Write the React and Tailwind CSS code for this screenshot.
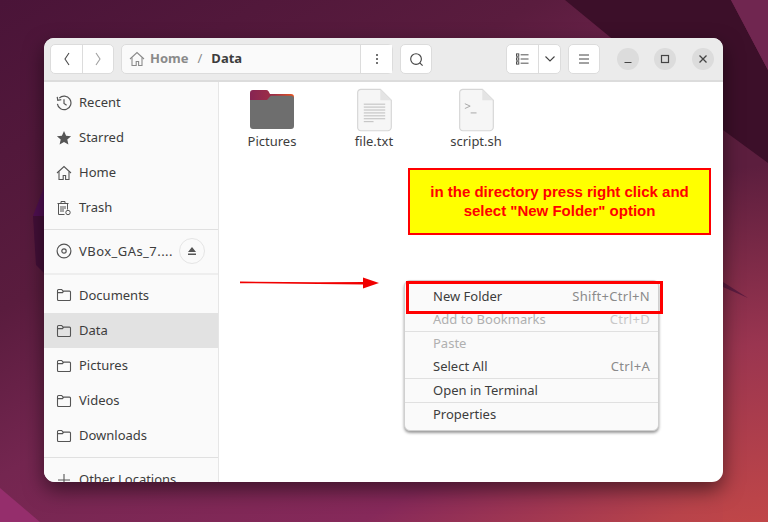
import React from 'react';

const ink = '#555555';

function Folder() {
  return (
    <svg width="16" height="16" viewBox="0 0 16 16" fill="none" stroke={ink} strokeWidth="1.1" className="shrink-0">
      <path d="M1.5 3.5a1 1 0 0 1 1-1h3.2l1.3 1.6h6.5a1 1 0 0 1 1 1v7.4a1 1 0 0 1-1 1h-11a1 1 0 0 1-1-1z" />
      <path d="M1.5 5.6h5l1.2-1.5" />
    </svg>
  );
}

function HomeIcon({ color = ink }) {
  return (
    <svg width="16" height="16" viewBox="0 0 16 16" fill="none" stroke={color} strokeWidth="1.1" className="shrink-0">
      <path d="M1 8l7-6.5L15 8" />
      <path d="M3 6.5v8h4.2v-4h2.4v4h3.4v-8" />
    </svg>
  );
}

function Clock() {
  return (
    <svg width="16" height="16" viewBox="0 0 16 16" fill="none" stroke={ink} strokeWidth="1.2" className="shrink-0">
      <path d="M3.2 3.2A6.8 6.8 0 1 1 1.4 8.8" />
      <path d="M1.2 1.8l.6 3.6 3.5-.7" />
      <path d="M8 4.2v4.2l2.6 1.8" />
    </svg>
  );
}

function Star() {
  return (
    <svg width="16" height="16" viewBox="0 0 16 16" fill={ink} className="shrink-0">
      <path d="M8 1l2.1 4.7 5 .5-3.8 3.4 1.1 5L8 12l-4.4 2.6 1.1-5L.9 6.2l5-.5z" />
    </svg>
  );
}

function Trash() {
  return (
    <svg width="16" height="16" viewBox="0 0 16 16" fill="none" stroke={ink} strokeWidth="1" className="shrink-0">
      <path d="M1.5 3.5h11M5 3.5V1.5h4v2" />
      <path d="M2.5 3.5v11h6M11.5 3.5v6" />
      <path d="M5 6v6M7 6v6M9 6v3" />
      <circle cx="12" cy="12.5" r="2.2" />
    </svg>
  );
}

function Disc() {
  return (
    <svg width="16" height="16" viewBox="0 0 16 16" fill="none" stroke={ink} strokeWidth="1.2" className="shrink-0">
      <circle cx="8" cy="8" r="6.9" />
      <circle cx="8" cy="8" r="2.2" />
    </svg>
  );
}

function SideRow({ icon, label, active }) {
  return (
    <div className={`flex h-[35.2px] items-center gap-[7px] pl-3 ${active ? 'bg-[#e2e2e2]' : ''}`}>
      {icon}
      <span>{label}</span>
    </div>
  );
}

function FileSheet({ children }) {
  return (
    <svg width="35" height="44" viewBox="0 0 36 44" fill="none">
      <path d="M4 .7h20L35.3 12v27.5a3.8 3.8 0 0 1-3.8 3.8H4a3.3 3.3 0 0 1-3.3-3.8V4A3.3 3.3 0 0 1 4 .7z" fill="#f6f6f6" stroke="#d6d6d6" strokeWidth="1.2" />
      <path d="M24 .7V12h11.3z" fill="#e4e4e4" />
      {children}
    </svg>
  );
}

function FileItem({ icon, label }) {
  return (
    <div className="flex w-[102px] flex-col items-center">
      <div className="flex h-[44px] items-center justify-center">{icon}</div>
      <span className="mt-[-1px] leading-[20px]">{label}</span>
    </div>
  );
}

function MenuRow({ label, keys, disabled }) {
  return (
    <div className={`flex h-[23px] items-center justify-between pl-[28px] pr-[8px] ${disabled ? 'text-[#b0b0b0]' : 'text-[#3d3d3d]'}`}>
      <span>{label}</span>
      {keys && <span className={`tracking-[0.3px] ${disabled ? 'text-[#c8c8c8]' : 'text-[#8a8a8a]'}`}>{keys}</span>}
    </div>
  );
}

export default function App() {
  return (
    <div className="relative h-[522px] w-[768px] overflow-hidden pl-[44px] pt-[38px] font-['Noto_Sans',sans-serif] text-[13px] text-[#3d3d3d]">
      {/* wallpaper */}
      <svg className="absolute inset-0" width="768" height="522" viewBox="0 0 768 522">
        <defs>
          <linearGradient id="wall" x1="0" y1="0" x2="420" y2="731" gradientUnits="userSpaceOnUse">
            <stop offset="0" stopColor="#4a1438" />
            <stop offset="0.32" stopColor="#5a1c3e" />
            <stop offset="0.49" stopColor="#742650" />
            <stop offset="0.75" stopColor="#86295a" />
            <stop offset="0.93" stopColor="#b8434a" />
            <stop offset="1" stopColor="#c24648" />
          </linearGradient>
          <linearGradient id="wallLow" x1="723" y1="170" x2="768" y2="522" gradientUnits="userSpaceOnUse">
            <stop offset="0" stopColor="#5c1e3e" />
            <stop offset="0.5" stopColor="#9a3550" />
            <stop offset="0.93" stopColor="#bb4449" />
            <stop offset="1" stopColor="#c04648" />
          </linearGradient>
        </defs>
        <rect width="768" height="522" fill="url(#wall)" />
        <path d="M723 125L768 160V522H723z" fill="url(#wallLow)" />
        <path d="M565 0H731L768 70V163L723 130L680 90L610 37z" fill="#3c0f29" />
        <path d="M731 0H768V70z" fill="#702650" />
        <path d="M0 488L40 522H0z" fill="#952e6c" />
        <path d="M44 187L33 216H44z" fill="#500f52" />
        <path d="M33 216L36 265L44 273V216z" fill="#430f38" />
        <path d="M723 282L748 298L723 287z" fill="#5c1c40" />
      </svg>

      <div className="relative flex h-[444px] w-[679px] flex-col overflow-hidden rounded-t-[10px] rounded-b-[11px] bg-white shadow-[0_8px_20px_rgba(0,0,0,0.5)]">
        {/* header bar */}
        <div className="flex h-[44px] shrink-0 items-center border-b-2 border-[#dcdcdc] bg-[#ebebeb] pl-[6px]">
          <div className="flex h-[30px] w-[64px] rounded-[5px] border border-[#dcdcdc] bg-white">
            <div className="flex w-[32px] items-center justify-center border-r border-[#dcdcdc]">
              <svg width="10" height="16" viewBox="0 0 10 16" fill="none" stroke="#4a4a4a" strokeWidth="1.1"><path d="M7 2L3 8l4 6" /></svg>
            </div>
            <div className="flex flex-1 items-center justify-center">
              <svg width="10" height="16" viewBox="0 0 10 16" fill="none" stroke="#a0a0a0" strokeWidth="1.1"><path d="M3 2l4 6-4 6" /></svg>
            </div>
          </div>
          <div className="ml-[7px] flex h-[30px] w-[272px] rounded-[5px] border border-[#dcdcdc] bg-[#fafafa]">
            <div className="flex flex-1 items-center pl-[7px] font-bold">
              <HomeIcon color="#8a8a8a" />
              <span className="ml-[5px] text-[#8a8a8a]">Home</span>
              <span className="ml-[9px] font-normal text-[#8a8a8a]">/</span>
              <span className="ml-[9px]">Data</span>
            </div>
            <div className="flex w-[32px] items-center justify-center border-l border-[#dcdcdc] bg-white">
              <svg width="4" height="12" viewBox="0 0 4 12" fill="#444"><circle cx="2" cy="2" r="1" /><circle cx="2" cy="6" r="1" /><circle cx="2" cy="10" r="1" /></svg>
            </div>
          </div>
          <div className="ml-[7px] flex h-[30px] w-[32px] items-center justify-center rounded-[5px] border border-[#dcdcdc] bg-white">
            <svg width="15" height="15" viewBox="0 0 16 16" fill="none" stroke="#444" strokeWidth="1.2"><circle cx="7.5" cy="7.5" r="5.7" /><path d="M11.5 11.5l3 3" /></svg>
          </div>
          <div className="ml-[74px] flex h-[30px] w-[55px] rounded-[5px] border border-[#dcdcdc] bg-white">
            <div className="flex w-[32px] items-center justify-center border-r border-[#dcdcdc]">
              <svg width="13" height="12" viewBox="0 0 14 12" fill="none" stroke="#444" strokeWidth="1"><rect x="0.5" y="0.5" width="2.5" height="2.5" /><rect x="0.5" y="4.75" width="2.5" height="2.5" /><rect x="0.5" y="9" width="2.5" height="2.5" /><path d="M5 1.5h8.5M5 6h8.5M5 10.5h8.5" /></svg>
            </div>
            <div className="flex flex-1 items-center justify-center">
              <svg width="12" height="8" viewBox="0 0 12 8" fill="none" stroke="#444" strokeWidth="1.1"><path d="M1.5 1.5L6 6l4.5-4.5" /></svg>
            </div>
          </div>
          <div className="ml-[7px] flex h-[30px] w-[32px] items-center justify-center rounded-[5px] border border-[#dcdcdc] bg-white">
            <svg width="12" height="10" viewBox="0 0 12 10" fill="none" stroke="#444" strokeWidth="1"><path d="M1 1h10M1 5h10M1 9h10" /></svg>
          </div>
          <div className="ml-[17px] flex h-[22px] w-[22px] items-center justify-center rounded-full bg-[#dcdcdc]">
            <svg width="10" height="10" viewBox="0 0 10 10" stroke="#444" strokeWidth="1.2"><path d="M1.5 8.5h7" /></svg>
          </div>
          <div className="ml-[15px] flex h-[22px] w-[22px] items-center justify-center rounded-full bg-[#dcdcdc]">
            <svg width="10" height="10" viewBox="0 0 10 10" fill="none" stroke="#444" strokeWidth="1.2"><rect x="1.5" y="1.5" width="7" height="7" /></svg>
          </div>
          <div className="ml-[16px] flex h-[22px] w-[22px] items-center justify-center rounded-full bg-[#dcdcdc]">
            <svg width="10" height="10" viewBox="0 0 10 10" stroke="#444" strokeWidth="1.3"><path d="M1.5 1.5l7 7M8.5 1.5l-7 7" /></svg>
          </div>
        </div>

        <div className="flex min-h-0 flex-1">
          {/* sidebar */}
          <div className="w-[175px] shrink-0 border-r border-[#e6e6e6] bg-[#fafafa] pt-[3px]">
            <SideRow icon={<Clock />} label="Recent" />
            <SideRow icon={<Star />} label="Starred" />
            <SideRow icon={<HomeIcon />} label="Home" />
            <SideRow icon={<Trash />} label="Trash" />
            <div className="mt-[3px] border-t border-[#e0e0e0]" />
            <div className="flex h-[43px] items-center gap-[7px] pl-3">
              <Disc />
              <span className="tracking-[0.45px]">VBox_GAs_7....</span>
              <div className="ml-[-1px] flex h-[26px] w-[26px] items-center justify-center rounded-full border border-[#e4e4e4]">
                <svg width="10" height="10" viewBox="0 0 10 10" fill="#555"><path d="M5 1l4 5H1zM1 7.5h8V9H1z" /></svg>
              </div>
            </div>
            <div className="mb-[3px] border-t-2 border-[#eeeeee]" />
            <SideRow icon={<Folder />} label="Documents" />
            <SideRow icon={<Folder />} label="Data" active />
            <SideRow icon={<Folder />} label="Pictures" />
            <SideRow icon={<Folder />} label="Videos" />
            <SideRow icon={<Folder />} label="Downloads" />
            <div className="mt-[3px] border-t border-[#e0e0e0]" />
            <div className="flex h-[45px] items-center gap-[7px] pl-3">
              <svg width="16" height="16" viewBox="0 0 16 16" stroke="#555" strokeWidth="1.1" className="shrink-0"><path d="M8 2v12M2 8h12" /></svg>
              <span>Other Locations</span>
            </div>
          </div>

          {/* file view */}
          <div className="flex flex-1 items-start pl-[2px] pt-[6px]">
            <FileItem
              label="Pictures"
              icon={
                <svg width="44" height="40" viewBox="0 0 44 40">
                  <defs>
                    <linearGradient id="tab" x1="0" y1="0" x2="44" y2="0" gradientUnits="userSpaceOnUse">
                      <stop offset="0" stopColor="#862453" />
                      <stop offset="0.55" stopColor="#a02f45" />
                      <stop offset="1" stopColor="#e95420" />
                    </linearGradient>
                  </defs>
                  <path d="M3 0h13a3 3 0 0 1 2.5 1.3L20 4h21a3 3 0 0 1 3 3v10H0V3a3 3 0 0 1 3-3z" fill="url(#tab)" />
                  <path d="M0 10h17l3-3.5a2 2 0 0 1 1.5-.7H41a3 3 0 0 1 3 3V36a3 3 0 0 1-3 3H3a3 3 0 0 1-3-3z" fill="#6e6e6e" />
                </svg>
              }
            />
            <FileItem
              label="file.txt"
              icon={
                <FileSheet>
                  <path d="M7 16h22M7 19h22M7 22h22M7 25h22M7 28h22M7 31h22M7 34h10" stroke="#bcbcbc" strokeWidth="1" />
                </FileSheet>
              }
            />
            <FileItem
              label="script.sh"
              icon={
                <FileSheet>
                  <path d="M6 15.5l5.5 2.5L6 20.5M12 25h6" fill="none" stroke="#a8a8a8" strokeWidth="1" />
                </FileSheet>
              }
            />
          </div>
        </div>
      </div>

      {/* annotation callout */}
      <div className="absolute left-[408px] top-[168px] flex h-[67px] w-[303px] items-center justify-center border-2 border-[#ff0000] bg-[#ffff00] pb-[2px] text-center font-['Liberation_Sans',sans-serif] text-[15px] font-bold leading-[19px] text-[#ff0000]">
        <p>in the directory press right click and<br />select "New Folder" option</p>
      </div>

      {/* arrow */}
      <svg className="absolute left-[238px] top-[274px]" width="144" height="18" viewBox="0 0 144 18">
        <path d="M2 7.6L80 8.2L126 8V10.6L80 10L2 9.2z" fill="#f00000" />
        <path d="M125 3.5l16 5.5-16 5.5z" fill="#f00000" />
      </svg>

      {/* context menu */}
      <div className="absolute left-[404px] top-[280px] h-[151px] w-[255px] rounded-[6px] border border-[#d0d0d0] bg-[#fafafa] pt-[4px] shadow-[0_2px_3px_rgba(0,0,0,0.4)]">
        <MenuRow label="New Folder" keys="Shift+Ctrl+N" />
        <MenuRow label="Add to Bookmarks" keys="Ctrl+D" disabled />
        <div className="border-t border-[#e0e0e0]" />
        <MenuRow label="Paste" disabled />
        <MenuRow label="Select All" keys="Ctrl+A" />
        <div className="border-t border-[#e0e0e0]" />
        <MenuRow label="Open in Terminal" />
        <div className="border-t border-[#e0e0e0]" />
        <MenuRow label="Properties" />
      </div>
      <div className="absolute left-[406px] top-[281px] h-[33px] w-[257px] border-[3px] border-[#ff0000]" />
    </div>
  );
}
